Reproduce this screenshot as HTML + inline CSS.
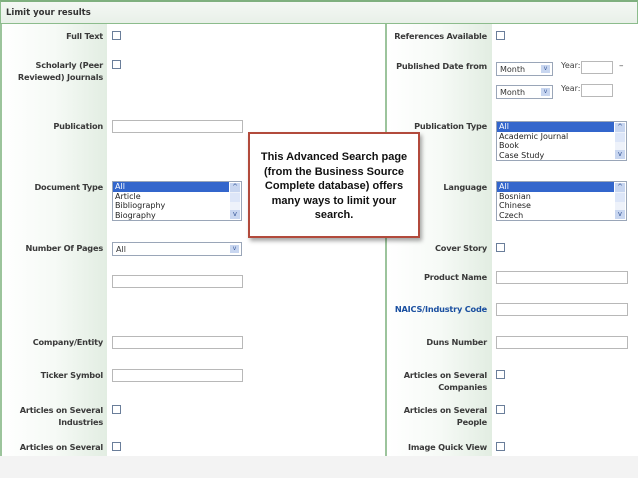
<!DOCTYPE html>
<html><head><meta charset="utf-8"><style>
*{margin:0;padding:0;box-sizing:border-box}
body{width:638px;height:478px;overflow:hidden;background:#fff;font-family:"DejaVu Sans","Liberation Sans",sans-serif;position:relative}
.a{position:absolute}
.hdr{left:0;top:0;width:638px;height:24px;background:linear-gradient(#f4f8f4,#e8f0e8);border-top:2px solid #7fb07f;border-bottom:1px solid #8cbc8c;border-left:1px solid #8cbc8c;border-right:1px solid #8cbc8c;font-size:8.5px;color:#333;padding:6px 0 0 5px;font-weight:bold}
.lab{font-size:8.2px;color:#3a3a3a;text-align:right;line-height:12px;font-weight:bold;letter-spacing:-0.2px}
.labL{left:0;width:103px}
.labR{left:387px;width:100px}
.cb{width:9px;height:9px;border:1px solid #6a7e9a;background:#fff}
.in{height:13px;border:1px solid #b8b8b8;background:#fff}
.lst{border:1px solid #9aa6b8;background:#fff;font-size:8px;line-height:9.5px;color:#222;overflow:hidden}
.lst div{padding-left:2px;height:9.5px}
.lst .s{background:#3366cc;color:#fff;margin-right:12px}
.sb{position:absolute;right:1px;top:1px;bottom:1px;width:10px;background:#eef2fa}
.sb i{position:absolute;left:0;width:10px;height:9px;background:#c8d6f0;color:#3a5a9a;font-size:7px;line-height:9px;text-align:center;font-style:normal}
.sel{height:14px;border:1px solid #9aa6b8;background:#fff;font-size:8px;color:#333;padding:2px 0 0 3px}
.sel i{position:absolute;right:2px;top:2px;width:9px;height:8px;background:#c8d6f0;color:#3a5a9a;font-size:6px;line-height:8px;text-align:center;font-style:normal}
.grad{background:linear-gradient(to right,#ffffff 0%,#f6faf6 50%,#e2ede2 100%)}
</style></head><body>
<div class="a hdr">Limit your results</div>
<div class="a grad" style="left:1px;top:24px;width:106px;height:432px"></div>
<div class="a" style="left:0;top:24px;width:2px;height:432px;background:#9cc49c"></div>
<div class="a grad" style="left:388px;top:24px;width:104px;height:432px"></div>
<div class="a" style="left:385px;top:24px;width:2px;height:432px;background:#9cc49c"></div>
<div class="a" style="left:0;top:456px;width:638px;height:22px;background:#f3f3f3"></div>

<div class="a lab labL" style="top:30px">Full Text</div>
<div class="a lab labL" style="top:59px">Scholarly (Peer<br>Reviewed) Journals</div>
<div class="a lab labL" style="top:120px">Publication</div>
<div class="a lab labL" style="top:181px">Document Type</div>
<div class="a lab labL" style="top:242px">Number Of Pages</div>
<div class="a lab labL" style="top:336px">Company/Entity</div>
<div class="a lab labL" style="top:369px">Ticker Symbol</div>
<div class="a lab labL" style="top:404px">Articles on Several<br>Industries</div>
<div class="a lab labL" style="top:441px">Articles on Several</div>

<div class="a cb" style="left:112px;top:31px"></div>
<div class="a cb" style="left:112px;top:60px"></div>
<div class="a in" style="left:112px;top:120px;width:131px"></div>
<div class="a lst" style="left:112px;top:181px;width:130px;height:40px"><div class="s">All</div><div>Article</div><div>Bibliography</div><div>Biography</div><span class="sb"><i style="top:0">^</i><i style="top:10px;background:#dde6f8"></i><i style="bottom:0">v</i></span></div>
<div class="a sel" style="left:112px;top:242px;width:130px">All<i>v</i></div>
<div class="a in" style="left:112px;top:275px;width:131px"></div>
<div class="a in" style="left:112px;top:336px;width:131px"></div>
<div class="a in" style="left:112px;top:369px;width:131px"></div>
<div class="a cb" style="left:112px;top:405px"></div>
<div class="a cb" style="left:112px;top:442px"></div>

<div class="a lab labR" style="top:30px">References Available</div>
<div class="a lab labR" style="top:60px">Published Date from</div>
<div class="a lab labR" style="top:120px">Publication Type</div>
<div class="a lab labR" style="top:181px">Language</div>
<div class="a lab labR" style="top:242px">Cover Story</div>
<div class="a lab labR" style="top:271px">Product Name</div>
<div class="a lab labR" style="top:303px;color:#1a4fa0">NAICS/Industry Code</div>
<div class="a lab labR" style="top:336px">Duns Number</div>
<div class="a lab labR" style="top:369px">Articles on Several<br>Companies</div>
<div class="a lab labR" style="top:404px">Articles on Several<br>People</div>
<div class="a lab labR" style="top:441px">Image Quick View</div>

<div class="a cb" style="left:496px;top:31px"></div>
<div class="a sel" style="left:496px;top:62px;width:57px">Month<i>v</i></div>
<div class="a" style="left:561px;top:61px;font-size:8px;color:#444">Year:</div>
<div class="a in" style="left:581px;top:61px;width:32px"></div>
<div class="a" style="left:619px;top:61px;font-size:9px;color:#444">–</div>
<div class="a sel" style="left:496px;top:85px;width:57px">Month<i>v</i></div>
<div class="a" style="left:561px;top:84px;font-size:8px;color:#444">Year:</div>
<div class="a in" style="left:581px;top:84px;width:32px"></div>
<div class="a lst" style="left:496px;top:121px;width:131px;height:40px"><div class="s">All</div><div>Academic Journal</div><div>Book</div><div>Case Study</div><span class="sb"><i style="top:0">^</i><i style="top:10px;background:#dde6f8"></i><i style="bottom:0">v</i></span></div>
<div class="a lst" style="left:496px;top:181px;width:131px;height:40px"><div class="s">All</div><div>Bosnian</div><div>Chinese</div><div>Czech</div><span class="sb"><i style="top:0">^</i><i style="top:10px;background:#dde6f8"></i><i style="bottom:0">v</i></span></div>
<div class="a cb" style="left:496px;top:243px"></div>
<div class="a in" style="left:496px;top:271px;width:132px"></div>
<div class="a in" style="left:496px;top:303px;width:132px"></div>
<div class="a in" style="left:496px;top:336px;width:132px"></div>
<div class="a cb" style="left:496px;top:370px"></div>
<div class="a cb" style="left:496px;top:405px"></div>
<div class="a cb" style="left:496px;top:442px"></div>

<div class="a" style="left:248px;top:132px;width:172px;height:106px;border:2px solid #b24a3c;background:#fff;box-shadow:2px 3px 4px rgba(0,0,0,0.35);font-family:'Liberation Sans',sans-serif;font-weight:bold;font-size:11px;line-height:14.5px;text-align:center;color:#111;padding-top:16px">This Advanced Search page<br>(from the Business Source<br>Complete database) offers<br>many ways to limit your<br>search.</div>
</body></html>
